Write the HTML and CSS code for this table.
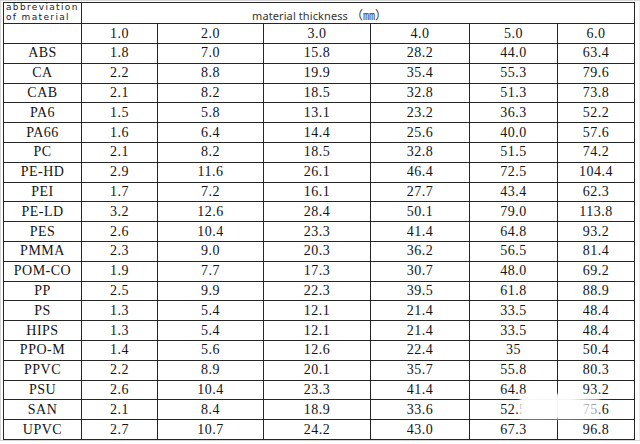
FILE: index.html
```html
<!DOCTYPE html>
<html lang="en">
<head>
<meta charset="utf-8">
<title>Material thickness table</title>
<link rel="stylesheet" href="styles.css">
</head>
<body>
<div class="frame">
  <table class="grid">
    <colgroup>
      <col class="c0"><col class="c1"><col class="c2"><col class="c3"><col class="c4"><col class="c5"><col class="c6">
    </colgroup>
    <thead>
      <tr class="h1">
        <th class="abbr"><span class="ln">abbreviation</span><span class="ln">of material</span></th>
        <th class="thick" colspan="6">material thickness <span class="unit">（㎜）</span></th>
      </tr>
      <tr class="h2">
        <th></th><td>1.0</td><td>2.0</td><td>3.0</td><td>4.0</td><td>5.0</td><td>6.0</td>
      </tr>
    </thead>
    <tbody>
      <tr><td>ABS</td><td>1.8</td><td>7.0</td><td>15.8</td><td>28.2</td><td>44.0</td><td>63.4</td></tr>
      <tr><td>CA</td><td>2.2</td><td>8.8</td><td>19.9</td><td>35.4</td><td>55.3</td><td>79.6</td></tr>
      <tr><td>CAB</td><td>2.1</td><td>8.2</td><td>18.5</td><td>32.8</td><td>51.3</td><td>73.8</td></tr>
      <tr><td>PA6</td><td>1.5</td><td>5.8</td><td>13.1</td><td>23.2</td><td>36.3</td><td>52.2</td></tr>
      <tr><td>PA66</td><td>1.6</td><td>6.4</td><td>14.4</td><td>25.6</td><td>40.0</td><td>57.6</td></tr>
      <tr><td>PC</td><td>2.1</td><td>8.2</td><td>18.5</td><td>32.8</td><td>51.5</td><td>74.2</td></tr>
      <tr><td>PE-HD</td><td>2.9</td><td>11.6</td><td>26.1</td><td>46.4</td><td>72.5</td><td>104.4</td></tr>
      <tr><td>PEI</td><td>1.7</td><td>7.2</td><td>16.1</td><td>27.7</td><td>43.4</td><td>62.3</td></tr>
      <tr><td>PE-LD</td><td>3.2</td><td>12.6</td><td>28.4</td><td>50.1</td><td>79.0</td><td>113.8</td></tr>
      <tr><td>PES</td><td>2.6</td><td>10.4</td><td>23.3</td><td>41.4</td><td>64.8</td><td>93.2</td></tr>
      <tr><td>PMMA</td><td>2.3</td><td>9.0</td><td>20.3</td><td>36.2</td><td>56.5</td><td>81.4</td></tr>
      <tr><td>POM-CO</td><td>1.9</td><td>7.7</td><td>17.3</td><td>30.7</td><td>48.0</td><td>69.2</td></tr>
      <tr><td>PP</td><td>2.5</td><td>9.9</td><td>22.3</td><td>39.5</td><td>61.8</td><td>88.9</td></tr>
      <tr><td>PS</td><td>1.3</td><td>5.4</td><td>12.1</td><td>21.4</td><td>33.5</td><td>48.4</td></tr>
      <tr><td>HIPS</td><td>1.3</td><td>5.4</td><td>12.1</td><td>21.4</td><td>33.5</td><td>48.4</td></tr>
      <tr><td>PPO-M</td><td>1.4</td><td>5.6</td><td>12.6</td><td>22.4</td><td>35</td><td>50.4</td></tr>
      <tr><td>PPVC</td><td>2.2</td><td>8.9</td><td>20.1</td><td>35.7</td><td>55.8</td><td>80.3</td></tr>
      <tr><td>PSU</td><td>2.6</td><td>10.4</td><td>23.3</td><td>41.4</td><td>64.8</td><td>93.2</td></tr>
      <tr><td>SAN</td><td>2.1</td><td>8.4</td><td>18.9</td><td>33.6</td><td>52.5</td><td>75.6</td></tr>
      <tr><td>UPVC</td><td>2.7</td><td>10.7</td><td>24.2</td><td>43.0</td><td>67.3</td><td>96.8</td></tr>
    </tbody>
  </table>
  <div class="smudge"></div>
</div>
</body>
</html>
```

FILE: styles.css
```css
html, body {
  margin: 0;
  padding: 0;
  background: #ffffff;
}

.frame {
  position: relative;
  width: 636px;
  height: 438px;
  padding: 1px 0 0 2px;
  border: 1px solid #d6d6d6;
  border-right-color: #ececec;
}

.grid {
  border-collapse: collapse;
  table-layout: fixed;
  width: 631px;
  color: #141414;
  font-family: "Liberation Serif", serif;
  font-size: 14px;
  letter-spacing: 0.5px;
}

.c0 { width: 78px; }
.c1 { width: 76px; }
.c2 { width: 106px; }
.c3 { width: 107px; }
.c4 { width: 99px; }
.c5 { width: 88px; }
.c6 { width: 77px; }

.grid th,
.grid td {
  border: 1px solid #262626;
  padding: 0;
  text-align: center;
  vertical-align: middle;
  font-weight: normal;
  white-space: nowrap;
  overflow: hidden;
}

.grid tr { height: 19.8px; }
.grid .h1, .grid .h2 { height: 20px; }

.abbr {
  font-family: "DejaVu Sans", sans-serif;
  font-size: 9px;
  letter-spacing: 1.35px;
  text-align: left !important;
  vertical-align: top !important;
  padding: 0 0 0 2px !important;
  color: #222222;
}

.ln {
  display: block;
  height: 9.6px;
  line-height: 9.6px;
}

.thick {
  font-family: "Noto Sans", sans-serif;
  font-size: 11px;
  letter-spacing: 0.1px;
  text-align: left !important;
  padding: 3px 0 0 170px !important;
  color: #333333;
}

.unit {
  font-family: "Noto Sans CJK SC", sans-serif;
  font-size: 12px;
  letter-spacing: 0;
}

.smudge {
  position: absolute;
  left: 519px;
  top: 393px;
  width: 80px;
  height: 25px;
  background: linear-gradient(to right, rgba(255,255,255,0.97) 0%, rgba(255,255,255,0.95) 65%, rgba(255,255,255,0.5) 100%);
  filter: blur(1.5px);
}
```
